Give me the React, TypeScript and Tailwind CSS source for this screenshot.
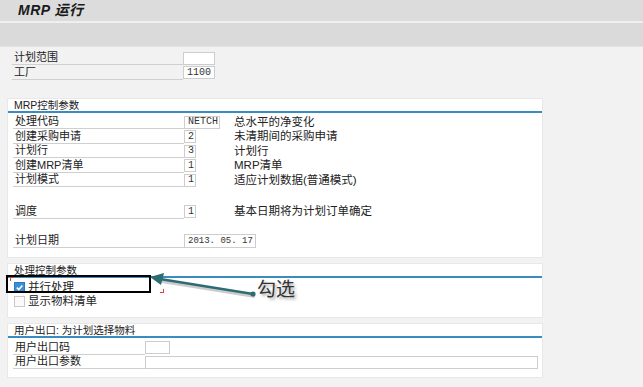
import React from 'react'

const font = { fontFamily: '"Liberation Sans", "Noto Sans CJK SC", sans-serif' }

const Field = ({ value, w }: { value?: string; w: string }) => (
  <div
    className={`${w} h-[13px] bg-white border border-[#cdcdcd] flex items-center pl-[3px] text-[10px] text-[#333] leading-none`}
    style={{ fontFamily: '"Liberation Mono", monospace' }}
  >
    {value}
  </div>
)

const Row = ({ label, value, w, desc, labelW = 'w-[171px]' }: { label: string; value?: string; w: string; desc?: string; labelW?: string }) => (
  <div className="flex items-center h-[14.5px]">
    <div className={`${labelW} h-[14px] border-b border-[#cfcfcf] pl-[2px] text-[11px] leading-[13px] text-[#222]`}>{label}</div>
    {desc ? (
      <>
        <div className="w-[50px]">
          <Field value={value} w={w} />
        </div>
        <div className="text-[11.5px] text-[#222]">{desc}</div>
      </>
    ) : (
      <Field value={value} w={w} />
    )}
  </div>
)

const GroupTitle = ({ title }: { title: string }) => (
  <div>
    <div className="h-[12px] pl-[6px] text-[10.5px] leading-[12px] text-[#222]">{title}</div>
    <div className="h-[2px] bg-[#3a8cc0]"></div>
  </div>
)

const Check = ({ checked, label }: { checked?: boolean; label: string }) => (
  <div className="flex items-center h-[14px] pl-[6px] gap-[3px]">
    <div className={`w-[11px] h-[11px] border ${checked ? 'border-[#2b7bc0] bg-white' : 'border-[#c8c8c8] bg-[#fafafa]'} flex items-center justify-center`}>
      {checked && (
        <svg width="9" height="9" viewBox="0 0 9 9">
          <rect x="0" y="0" width="9" height="9" fill="#3b8fd6" />
          <path d="M1.8 4.6 L3.8 6.6 L7.4 2.4" stroke="white" strokeWidth="1.6" fill="none" />
        </svg>
      )}
    </div>
    <span className="text-[11.5px] text-[#222]">{label}</span>
  </div>
)

export default function App() {
  return (
    <div className="relative w-[643px] h-[387px] overflow-hidden bg-[#f2f2f2]" style={font}>
      <div className="h-[21px] bg-[#dcdcdc] flex items-center pl-[18px]">
        <span className="text-[14px] font-bold italic text-[#1a1a1a] tracking-[0.5px]">MRP 运行</span>
      </div>
      <div className="h-[2px] bg-[#efefef]"></div>
      <div className="h-[24px] bg-[#dadada] border-b border-[#e4e4e4]"></div>

      <div className="pt-[4px] pl-[12px]">
        <Row label="计划范围" w="w-[32px]" />
        <Row label="工厂" value="1100" w="w-[32px]" />
      </div>

      <div className="ml-[7px] mt-[18px] w-[536px] bg-white border border-[#e8e8e8]">
        <GroupTitle title="MRP控制参数" />
        <div className="pt-[2px] pl-[5px]">
          <Row label="处理代码" value="NETCH" w="w-[36px]" desc="总水平的净变化" />
          <Row label="创建采购申请" value="2" w="w-[12px]" desc="未清期间的采购申请" />
          <Row label="计划行" value="3" w="w-[12px]" desc="计划行" />
          <Row label="创建MRP清单" value="1" w="w-[12px]" desc="MRP清单" />
          <Row label="计划模式" value="1" w="w-[12px]" desc="适应计划数据(普通模式)" />
          <div className="h-[17px]"></div>
          <Row label="调度" value="1" w="w-[12px]" desc="基本日期将为计划订单确定" />
          <div className="h-[15px]"></div>
          <div className="flex items-center h-[14.5px]">
            <div className="w-[171px] h-[14px] border-b border-[#cfcfcf] pl-[2px] text-[11px] leading-[13px] text-[#222]">计划日期</div>
            <div className="w-[72px] h-[14px] bg-white border border-[#cdcdcd] flex items-center pl-[3px] text-[9px] text-[#333]" style={{ fontFamily: '"Liberation Mono", monospace' }}>2013. 05. 17</div>
          </div>
          <div className="h-[8px]"></div>
        </div>
      </div>

      <div className="ml-[7px] mt-[5px] w-[536px] bg-white border border-[#e8e8e8]">
        <GroupTitle title="处理控制参数" />
        <div className="pt-[3px] pb-[8px]">
          <Check checked label="并行处理" />
          <Check label="显示物料清单" />
        </div>
      </div>

      <div className="ml-[7px] mt-[5px] w-[536px] bg-white border border-[#e8e8e8]">
        <GroupTitle title="用户出口: 为计划选择物料" />
        <div className="pt-[3px] pl-[5px] pb-[7px]">
          <Row label="用户出口码" w="w-[25px]" labelW="w-[132px]" />
          <Row label="用户出口参数" w="w-[393px]" labelW="w-[132px]" />
        </div>
      </div>

      {/* annotation */}
      <div className="absolute left-[6px] top-[275px] w-[145px] h-[18px] border-2 border-black"></div>
      <div className="absolute left-[10px] top-[277px] w-[4px] h-[4px] border-l border-t border-[#e0403a]"></div>
      <div className="absolute left-[160px] top-[289px] w-[4px] h-[4px] border-r border-b border-[#e0403a]"></div>
      <svg className="absolute left-0 top-0" width="643" height="387">
        <line x1="255" y1="296" x2="162" y2="281" stroke="#000" strokeOpacity="0.2" strokeWidth="4" />
        <line x1="253" y1="294" x2="160" y2="279" stroke="#2c6c72" strokeWidth="2.6" />
        <polygon points="150,277 164,273 161,285" fill="#2c6c72" />
        <circle cx="253" cy="294" r="2.6" fill="#2c6c72" />
      </svg>
      <div className="absolute left-[257px] top-[276px] text-[19px] text-[#333] [text-shadow:2px_2px_3px_rgba(0,0,0,0.35)]">勾选</div>
    </div>
  )
}
